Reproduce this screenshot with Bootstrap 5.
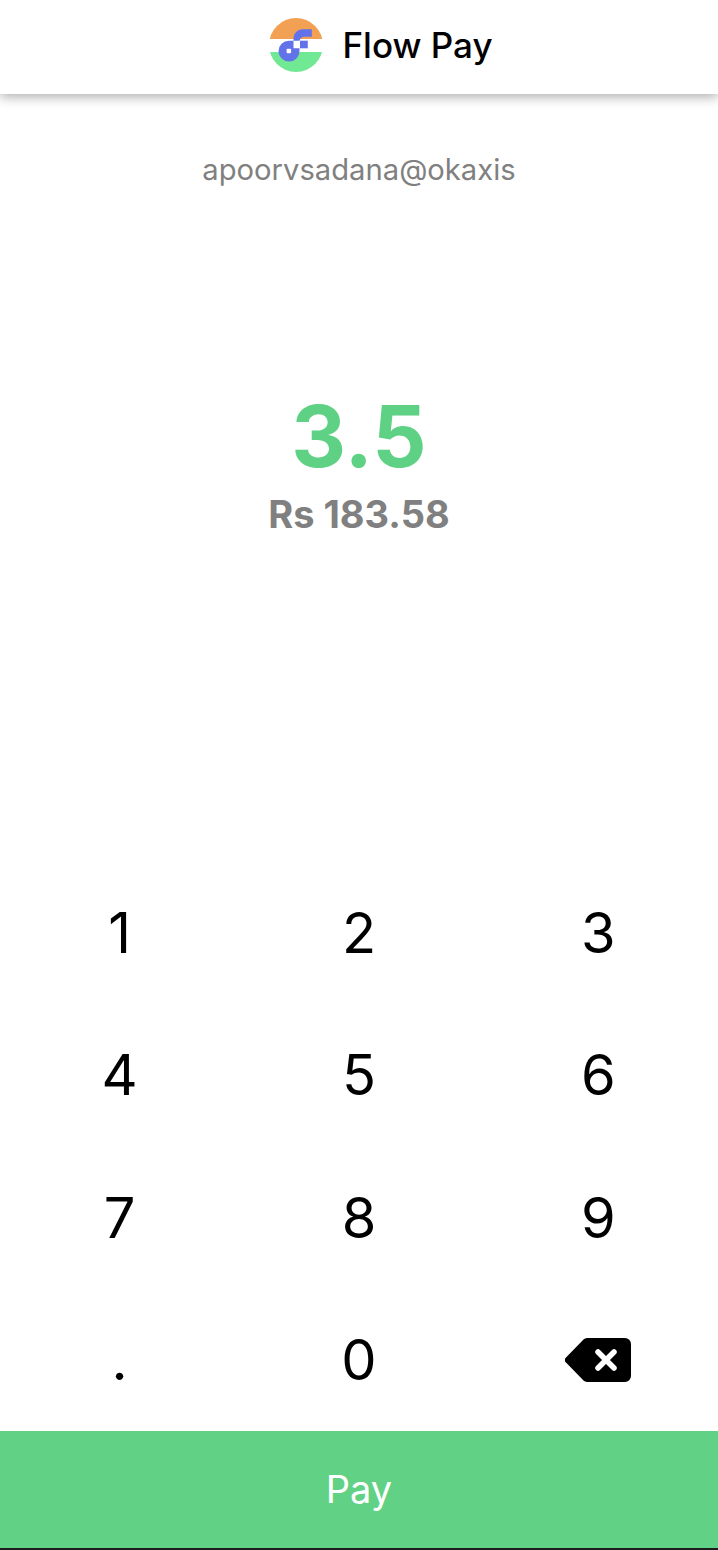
<!DOCTYPE html>
<html lang="en">
<head>
    <meta charset="UTF-8">
    <meta name="viewport" content="width=device-width, initial-scale=1.0">
    <title>Flow Pay</title>
    <link href="https://cdn.jsdelivr.net/npm/bootstrap@5.3.0/dist/css/bootstrap.min.css" rel="stylesheet">
    <style>
        html, body {
            height: 1550px;
            overflow: hidden;
        }
        body {
            font-family: Inter, "Noto Sans", sans-serif;
            background-color: #fff;
            border-bottom: 2px solid #1c1c1c;
        }
        .app-head {
            height: 94px;
            gap: 19px;
            padding-left: 44px;
            padding-bottom: 2px;
            box-shadow: 0 3px 11px rgba(0, 0, 0, 0.32);
        }
        .app-name {
            font-size: 35px;
            font-weight: 500;
            color: #000;
            line-height: 1;
        }
        .app-logo {
            width: 54px;
            height: 54px;
            margin-bottom: 2px;
        }
        .upi-id {
            margin-top: 56px;
            height: 40px;
            font-size: 29.2px;
            line-height: 40px;
            color: #808080;
        }
        .amount-box {
            margin-top: 203px;
            height: 469px;
        }
        .amount-main {
            font-size: 85px;
            line-height: 88px;
            font-weight: 700;
            color: #5ed184;
        }
        .amount-fiat {
            font-size: 38px;
            line-height: 46px;
            margin-top: 10px;
            font-weight: 700;
            color: #808080;
        }
        .keypad {
            display: grid;
            grid-template-columns: repeat(3, 1fr);
            grid-auto-rows: 142.33px;
        }
        .key-btn {
            font-size: 56px;
            line-height: 1;
            color: #000;
            background: transparent;
            border: 0;
            padding: 0;
        }
        .key-back {
            display: block;
            margin: 0 auto;
        }
        .pay-btn {
            height: 117px;
            background-color: #61d185;
            color: #fff;
            font-size: 38px;
            border: 0;
            border-radius: 0;
        }
    </style>
</head>
<body class="d-flex flex-column">
    <header class="app-head d-flex align-items-center justify-content-center bg-white position-relative">
        <svg class="app-logo" viewBox="0 0 54 54" xmlns="http://www.w3.org/2000/svg">
            <defs><clipPath id="disc"><circle cx="27" cy="27" r="27"/></clipPath></defs>
            <g clip-path="url(#disc)">
                <rect width="54" height="21" fill="#f2a154"/>
                <rect y="21" width="54" height="13" fill="#fff"/>
                <rect y="34" width="54" height="20" fill="#71e894"/>
            </g>
            <path d="M42.800 11.300V18.700H36a5.500 5.500 0 0 0-5.500 4H24.500V30.300H30.500V33a10.500 10.400 0 1 1-10.500-10.300H24.500V20a9 9 0 0 1 8.500-8.700z" fill="#6273ea"/>
            <rect x="31" y="22.700" width="7.800" height="7.600" fill="#6273ea"/>
            <rect x="17.600" y="30.800" width="4.500" height="4.500" rx="1" fill="#fff"/>
        </svg>
        <span class="app-name">Flow Pay</span>
    </header>

    <div class="upi-id text-center">apoorvsadana@okaxis</div>

    <div class="amount-box text-center">
        <div class="amount-main">3.5</div>
        <div class="amount-fiat">Rs 183.58</div>
    </div>

    <div class="keypad">
        <button class="key-btn">1</button>
        <button class="key-btn">2</button>
        <button class="key-btn">3</button>
        <button class="key-btn">4</button>
        <button class="key-btn">5</button>
        <button class="key-btn">6</button>
        <button class="key-btn">7</button>
        <button class="key-btn">8</button>
        <button class="key-btn">9</button>
        <button class="key-btn">.</button>
        <button class="key-btn">0</button>
        <button class="key-btn" aria-label="Delete">
            <svg class="key-back" width="66" height="44" viewBox="0 0 66 44" xmlns="http://www.w3.org/2000/svg">
                <path d="M22 0h38a6 6 0 0 1 6 6v32a6 6 0 0 1-6 6H22a5 5 0 0 1-3.500-1.500L1 24.500a3.500 3.500 0 0 1 0-5L18.500 1.500A5 5 0 0 1 22 0z" fill="#000"/>
                <path d="M33 14l16 16M49 14L33 30" stroke="#fff" stroke-width="5.500" stroke-linecap="round"/>
            </svg>
        </button>
    </div>

    <button class="btn pay-btn w-100 mt-auto">Pay</button>
    <script src="https://cdn.jsdelivr.net/npm/bootstrap@5.3.0/dist/js/bootstrap.bundle.min.js"></script>
</body>
</html>
